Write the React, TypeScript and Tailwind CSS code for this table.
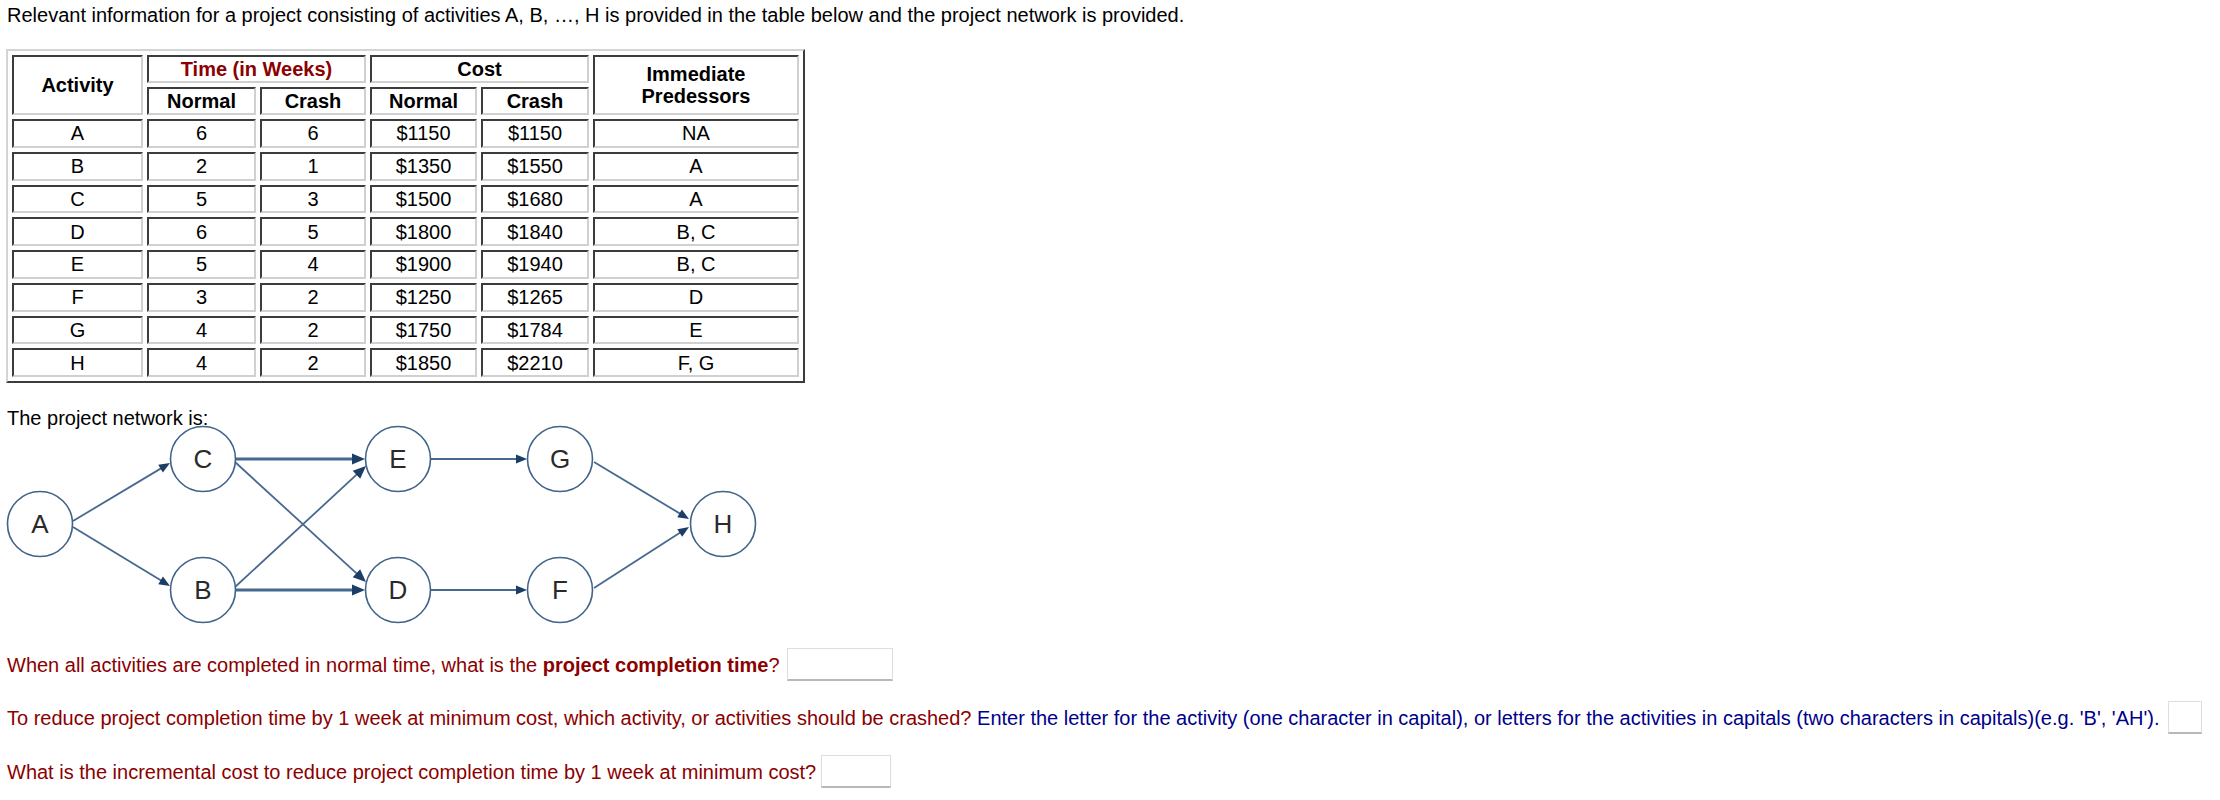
import React from "react";

type Edge = { x1: number; y1: number; x2: number; y2: number; w: number; big?: boolean };

const nodes = [
  { l: "A", x: 40, y: 99 },
  { l: "C", x: 203, y: 34 },
  { l: "B", x: 203, y: 165 },
  { l: "E", x: 398, y: 34 },
  { l: "D", x: 398, y: 165 },
  { l: "G", x: 560, y: 34 },
  { l: "F", x: 560, y: 165 },
  { l: "H", x: 723, y: 99 },
];

const edges: Edge[] = [
  { x1: 73, y1: 96, x2: 170, y2: 38, w: 1.8 },
  { x1: 73, y1: 102, x2: 170, y2: 161, w: 1.8 },
  { x1: 236, y1: 34, x2: 365, y2: 34, w: 3, big: true },
  { x1: 236, y1: 165, x2: 365, y2: 165, w: 3, big: true },
  { x1: 235, y1: 37, x2: 366, y2: 157, w: 1.8, big: true },
  { x1: 235, y1: 162, x2: 366, y2: 41, w: 1.8, big: true },
  { x1: 430, y1: 34, x2: 527, y2: 34, w: 2.2 },
  { x1: 430, y1: 165, x2: 527, y2: 165, w: 2.2 },
  { x1: 594, y1: 37, x2: 689, y2: 94, w: 1.8 },
  { x1: 594, y1: 163, x2: 689, y2: 102, w: 1.8 },
];

function Arrow({ e }: { e: Edge }) {
  const a = Math.atan2(e.y2 - e.y1, e.x2 - e.x1);
  const len = e.big ? 13 : 11;
  const hw = e.big ? 5.5 : 4.5;
  const dx = Math.cos(a);
  const dy = Math.sin(a);
  const bx = e.x2 - dx * len;
  const by = e.y2 - dy * len;
  const px = -dy;
  const py = dx;
  const pts = `${e.x2},${e.y2} ${bx + px * hw},${by + py * hw} ${bx - px * hw},${by - py * hw}`;
  return (
    <g>
      <line x1={e.x1} y1={e.y1} x2={bx + dx * 2} y2={by + dy * 2} stroke="#47698f" strokeWidth={e.w} />
      <polygon points={pts} fill="#1c3e66" />
    </g>
  );
}

const cell =
  "p-0 text-center align-middle border-2 border-t-[#3c3c3c] border-l-[#3c3c3c] border-r-[#d0d0d0] border-b-[#d0d0d0]";

const rows = [
  ["A", "6", "6", "$1150", "$1150", "NA"],
  ["B", "2", "1", "$1350", "$1550", "A"],
  ["C", "5", "3", "$1500", "$1680", "A"],
  ["D", "6", "5", "$1800", "$1840", "B, C"],
  ["E", "5", "4", "$1900", "$1940", "B, C"],
  ["F", "3", "2", "$1250", "$1265", "D"],
  ["G", "4", "2", "$1750", "$1784", "E"],
  ["H", "4", "2", "$1850", "$2210", "F, G"],
];

const box = "inline-block shrink-0 h-[33px] bg-white border border-[#dedede] border-b-2 border-b-[#b8b8b8]";

export default function App() {
  return (
    <div className="w-[2220px] min-h-[800px] bg-white text-[20px] text-black font-['Liberation_Sans',Arial,Helvetica,sans-serif]">
      <div className="pt-[4px] pl-[7px] leading-[23px] whitespace-nowrap">
        Relevant information for a project consisting of activities A, B, …, H is provided in the table below and the
        project network is provided.
      </div>

      <div className="pl-[6px] mt-[22px]">
        <table className="border-separate border-spacing-[4px] border-2 border-t-[#d4d4d4] border-l-[#d4d4d4] border-r-[#3c3c3c] border-b-[#3c3c3c] leading-[22px]">
          <tbody>
            <tr className="h-[28px]">
              <td rowSpan={2} className={cell + " font-bold w-[131px]"}>
                Activity
              </td>
              <td colSpan={2} className={cell + " font-bold text-[#8b0000]"}>
                Time (in Weeks)
              </td>
              <td colSpan={2} className={cell + " font-bold"}>
                Cost
              </td>
              <td rowSpan={2} className={cell + " font-bold w-[206px]"}>
                Immediate
                <br />
                Predessors
              </td>
            </tr>
            <tr className="h-[28px]">
              <td className={cell + " font-bold w-[109px]"}>Normal</td>
              <td className={cell + " font-bold w-[106px]"}>Crash</td>
              <td className={cell + " font-bold w-[107px]"}>Normal</td>
              <td className={cell + " font-bold w-[108px]"}>Crash</td>
            </tr>
            {rows.map((r) => (
              <tr key={r[0]} className="h-[28.75px]">
                {r.map((c, i) => (
                  <td key={i} className={cell}>
                    {c}
                  </td>
                ))}
              </tr>
            ))}
          </tbody>
        </table>
      </div>

      <div className="pl-[7px] mt-[25px] leading-[20px]">The project network is:</div>

      <svg width="780" height="200" viewBox="0 0 780 200" className="block -mt-[3px]">
        {edges.map((e, i) => (
          <Arrow key={i} e={e} />
        ))}
        {nodes.map((n) => (
          <g key={n.l}>
            <circle cx={n.x} cy={n.y} r={32.5} fill="white" stroke="#3f6389" strokeWidth={1.6} />
            <text
              x={n.x}
              y={n.y + 9}
              textAnchor="middle"
              fontSize="26"
              fill="#2a2a2a"
              fontFamily="'Liberation Sans', Arial, sans-serif"
            >
              {n.l}
            </text>
          </g>
        ))}
      </svg>

      <div className="pl-[7px] text-[#8b0000] whitespace-nowrap">
        <div className="flex items-center h-[33px] mt-[23px]">
          <span>
            When all activities are completed in normal time, what is the <b>project completion time</b>?
          </span>
          <span className={box + " ml-[7px] w-[106px]"} />
        </div>
        <div className="flex items-center h-[33px] mt-[20px]">
          <span>
            To reduce project completion time by 1 week at minimum cost, which activity, or activities should be
            crashed?{" "}
            <span className="text-[#00008b]">
              Enter the letter for the activity (one character in capital), or letters for the activities in capitals
              (two characters in capitals)(e.g. 'B', 'AH').
            </span>
          </span>
          <span className={box + " ml-[9px] w-[34px]"} />
        </div>
        <div className="flex items-center h-[33px] mt-[21px]">
          <span>What is the incremental cost to reduce project completion time by 1 week at minimum cost?</span>
          <span className={box + " ml-[5px] w-[70px]"} />
        </div>
      </div>
    </div>
  );
}
